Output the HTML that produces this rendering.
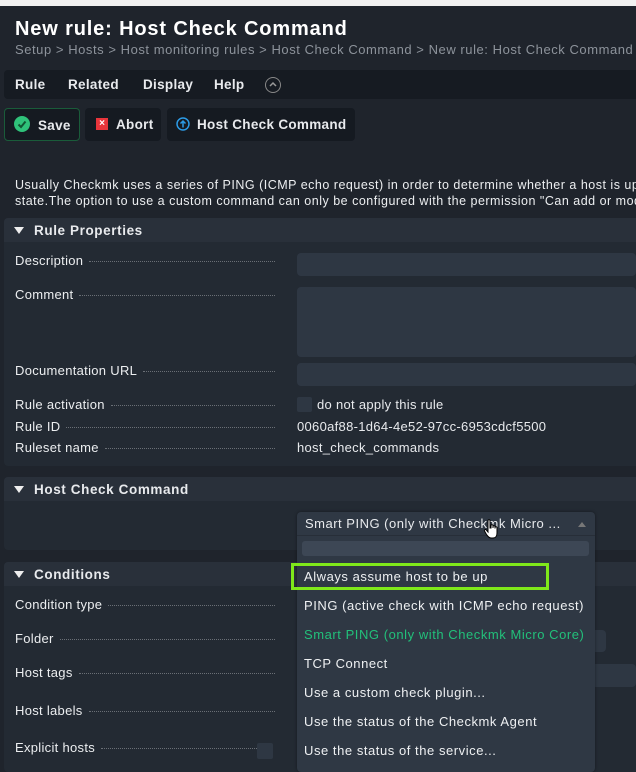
<!DOCTYPE html>
<html><head><meta charset="utf-8"><style>
*{box-sizing:border-box;margin:0;padding:0}
body{width:636px;height:766px;overflow:hidden;background:#1f242c;font-family:"Liberation Sans",sans-serif;color:#e8eaed;position:relative;font-size:13px}
.a{position:absolute;white-space:nowrap}
.lbl{position:absolute;left:15px;width:260px;display:flex;align-items:baseline;font-size:13px;color:#eceef0;letter-spacing:.3px}
.lbl:after{content:"";flex:1;border-bottom:1px dotted #6a6f76;margin-left:6px;height:1px;transform:translateY(-3px)}
.sec{position:absolute;left:4px;right:0;background:#232a33;border-radius:4px 0 0 4px}
.sh{position:absolute;left:4px;right:0;height:24px;background:#29303a;font-weight:bold;font-size:13.5px;letter-spacing:.6px;padding:5px 0 0 30px;border-radius:4px 0 0 0}
.sh:before{content:"";position:absolute;left:10px;top:9px;border-left:5px solid transparent;border-right:5px solid transparent;border-top:7px solid #eee}
.inp{position:absolute;background:#2e3743;border-radius:4px}
.btn{position:absolute;top:108px;height:33px;background:#151a21;border-radius:4px;font-weight:bold;font-size:13.5px;padding:9px 0 0 0;letter-spacing:.3px}
.it{position:absolute;left:304px;font-size:13px;letter-spacing:.55px;color:#eef0f2}
</style></head><body>
<div class="a" style="left:0;top:0;width:636px;height:6px;background:#f1f1f1"></div>
<div class="a" style="left:15px;top:18px;font-size:20px;font-weight:bold;color:#fff;letter-spacing:.85px">New rule: Host Check Command</div>
<div class="a" style="left:15px;top:42px;font-size:13px;color:#8d939b;letter-spacing:.55px">Setup &gt; Hosts &gt; Host monitoring rules &gt; Host Check Command &gt; New rule: Host Check Command</div>
<div class="a" style="left:4px;top:70px;width:632px;height:29px;background:#161b22;border-radius:4px 0 0 4px"></div>
<div class="a" style="left:15px;top:77px;font-weight:bold;font-size:13.5px;letter-spacing:.3px">Rule</div>
<div class="a" style="left:68px;top:77px;font-weight:bold;font-size:13.5px;letter-spacing:.3px">Related</div>
<div class="a" style="left:143px;top:77px;font-weight:bold;font-size:13.5px;letter-spacing:.3px">Display</div>
<div class="a" style="left:214px;top:77px;font-weight:bold;font-size:13.5px;letter-spacing:.3px">Help</div>
<div class="a" style="left:265px;top:77px;width:16px;height:16px;border:1.5px solid #888;border-radius:50%"></div>
<svg class="a" style="left:268px;top:80px" width="10" height="10"><path d="M2 6 L5 3 L8 6" stroke="#999" stroke-width="1.5" fill="none"/></svg>
<div class="btn" style="left:4px;width:76px;border:1px solid #1a5c3a;padding-left:33px">Save</div>
<svg class="a" style="left:14px;top:116px" width="16" height="16"><circle cx="8" cy="8" r="8" fill="#2fc27a"/><path d="M4.5 8.5 L7 11 L11.5 5.5" stroke="#153" stroke-width="2" fill="none"/></svg>
<div class="btn" style="left:85px;width:76px;padding-left:31px">Abort</div>
<div class="a" style="left:96px;top:118px;width:12px;height:12px;background:#e8353b;color:#fff;font-size:10px;line-height:12px;text-align:center;font-weight:bold">×</div>
<div class="btn" style="left:167px;width:188px;padding-left:30px">Host Check Command</div>
<svg class="a" style="left:176px;top:117px" width="14" height="14"><circle cx="7" cy="7" r="6" stroke="#2c9be6" stroke-width="1.5" fill="none"/><path d="M7 10.5 V4 M4.5 6.5 L7 4 L9.5 6.5" stroke="#2c9be6" stroke-width="1.5" fill="none"/></svg>
<div class="a" style="left:15px;top:177px;font-size:12.5px;line-height:16px;color:#eceef0;letter-spacing:.5px">Usually Checkmk uses a series of PING (ICMP echo request) in order to determine whether a host is up<br>state.The option to use a custom command can only be configured with the permission "Can add or modify</div>

<div class="sec" style="top:218px;height:248px"></div>
<div class="sh" style="top:218px">Rule Properties</div>
<div class="lbl" style="top:253px">Description</div>
<div class="inp" style="left:297px;top:253px;width:339px;height:23px"></div>
<div class="lbl" style="top:287px">Comment</div>
<div class="inp" style="left:297px;top:287px;width:339px;height:70px"></div>
<div class="lbl" style="top:363px">Documentation URL</div>
<div class="inp" style="left:297px;top:363px;width:339px;height:23px"></div>
<div class="lbl" style="top:397px">Rule activation</div>
<div class="inp" style="left:297px;top:397px;width:15px;height:15px;border-radius:2px"></div>
<div class="a" style="left:317px;top:397px;letter-spacing:.3px">do not apply this rule</div>
<div class="lbl" style="top:419px">Rule ID</div>
<div class="a" style="left:297px;top:419px;letter-spacing:.3px">0060af88-1d64-4e52-97cc-6953cdcf5500</div>
<div class="lbl" style="top:440px">Ruleset name</div>
<div class="a" style="left:297px;top:440px;letter-spacing:.3px">host_check_commands</div>

<div class="sec" style="top:477px;height:73px"></div>
<div class="sh" style="top:477px">Host Check Command</div>

<div class="sec" style="top:562px;height:210px"></div>
<div class="sh" style="top:562px">Conditions</div>
<div class="lbl" style="top:597px">Condition type</div>
<div class="lbl" style="top:631px">Folder</div>
<div class="inp" style="left:560px;top:630px;width:46px;height:22px"></div>
<div class="lbl" style="top:665px">Host tags</div>
<div class="inp" style="left:560px;top:664px;width:76px;height:23px"></div>
<div class="lbl" style="top:703px">Host labels</div>
<div class="lbl" style="top:740px;width:244px">Explicit hosts</div>
<div class="inp" style="left:257px;top:743px;width:16px;height:16px;border-radius:2px"></div>

<div class="a" style="left:297px;top:512px;width:298px;height:260px;background:#2f3844;border-radius:4px;box-shadow:0 0 3px rgba(0,0,0,.4)"></div>
<div class="a" style="left:297px;top:535px;width:298px;height:1px;background:#272e38"></div>
<div class="a" style="left:305px;top:516px;letter-spacing:.5px">Smart PING (only with Checkmk Micro ...</div>
<div class="a" style="left:578px;top:522px;border-left:4px solid transparent;border-right:4px solid transparent;border-bottom:5px solid #777"></div>
<div class="a" style="left:302px;top:541px;width:287px;height:15px;background:#3d4755;border-radius:3px"></div>
<div class="a" style="left:291px;top:563px;width:258px;height:27px;border:3px solid #7fe81a"></div>
<div class="it" style="top:569px">Always assume host to be up</div>
<div class="it" style="top:598px">PING (active check with ICMP echo request)</div>
<div class="it" style="top:627px;color:#22c07a">Smart PING (only with Checkmk Micro Core)</div>
<div class="it" style="top:656px">TCP Connect</div>
<div class="it" style="top:685px">Use a custom check plugin...</div>
<div class="it" style="top:714px">Use the status of the Checkmk Agent</div>
<div class="it" style="top:743px">Use the status of the service...</div>
<svg class="a" style="left:483px;top:519px" width="18" height="22"><path d="M5 1.5 C5 0.5 7 0.5 7 1.5 V9 L8 9 V6.5 C8 5.5 10 5.5 10 6.5 V9 V7.5 C10 6.5 12 6.5 12 7.5 V9.5 V8.5 C12 7.5 14 7.5 14 8.5 V14 C14 17 12.5 19 10 19 H8 C6 19 5 17.5 3.5 15.5 L1.5 12 C1 11 2.5 10 3.3 11 L5 13 Z" fill="#fff" stroke="#000" stroke-width="1"/></svg>
</body></html>
